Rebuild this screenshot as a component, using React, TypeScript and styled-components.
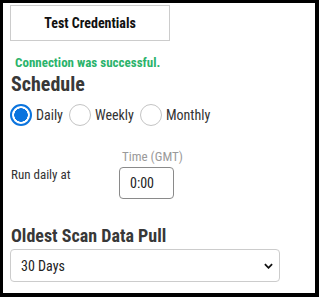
import { useState } from "react"
import styled, { createGlobalStyle } from "styled-components"

const GlobalStyle = createGlobalStyle`
  body {
    margin: 0;
    background: #fff;
    font-family: "Roboto Condensed", Roboto, sans-serif;
  }
`

const App = () => {
  const [schedule, setSchedule] = useState('daily')
  const [time, setTime] = useState('0:00')
  const [days, setDays] = useState('30')

  const options = [
    { value: 'daily', label: 'Daily' },
    { value: 'weekly', label: 'Weekly' },
    { value: 'monthly', label: 'Monthly' },
  ]

  return (
    <>
      <GlobalStyle />
      <Frame>
        <TestButton>Test Credentials</TestButton>
        <Success>Connection was successful.</Success>
        <Heading>Schedule</Heading>
        <RadioGroup>
          {options.map(o => (
            <RadioOption key={o.value}>
              <RadioInput
                type={'radio'}
                name={'schedule'}
                checked={schedule === o.value}
                onChange={() => setSchedule(o.value)}
              />
              {o.label}
            </RadioOption>
          ))}
        </RadioGroup>
        <TimeGrid>
          <span />
          <TimeLabel>Time (GMT)</TimeLabel>
          <RunLabel>Run daily at</RunLabel>
          <TimeInput value={time} onChange={e => setTime(e.target.value)} />
        </TimeGrid>
        <SubHeading>Oldest Scan Data Pull</SubHeading>
        <SelectWrap>
          <Select value={days} onChange={e => setDays(e.target.value)}>
            <option value={'30'}>30 Days</option>
            <option value={'60'}>60 Days</option>
            <option value={'90'}>90 Days</option>
          </Select>
          <Chevron viewBox="0 0 10 6">
            <path d="M1 1 L5 5 L9 1" fill="none" stroke="#111" strokeWidth="2" />
          </Chevron>
        </SelectWrap>
      </Frame>
    </>
  )
}

const Frame = styled.div`
  width: 319px;
  height: 297px;
  box-sizing: border-box;
  border: 3px solid #000;
  border-right-width: 4px;
  border-bottom-width: 4px;
  padding: 2px 0 0 7px;
  display: flex;
  flex-direction: column;
  align-items: flex-start;
`
const TestButton = styled.button`
  width: 160px;
  height: 36px;
  margin: 0;
  padding: 0;
  background: #fff;
  border: 1px solid #ccc;
  font-family: "Roboto Condensed", Roboto, sans-serif;
  font-weight: 700;
  font-size: 14px;
  color: #111;
`
const Success = styled.div`
  margin: 14px 0 0 5px;
  font-size: 13px;
  line-height: 15px;
  font-weight: 700;
  color: #2bb36b;
`
const Heading = styled.h2`
  margin: 2px 0 0 1px;
  font-size: 20px;
  line-height: 24px;
  font-weight: 700;
  color: #383838;
`
const RadioGroup = styled.div`
  display: flex;
  align-items: center;
  gap: 6px;
  margin-top: 8px;
  height: 22px;
`
const RadioOption = styled.label`
  display: flex;
  align-items: center;
  gap: 4px;
  font-size: 14px;
  color: #333;
`
const RadioInput = styled.input`
  appearance: none;
  margin: 0;
  width: 22px;
  height: 22px;
  box-sizing: border-box;
  border-radius: 50%;
  border: 1px solid #c4c4c4;
  background: #fff;
  &:checked {
    border: 2px solid #0b74de;
    background: radial-gradient(circle, #0b74de 0 6.5px, #fff 7px);
  }
`
const TimeGrid = styled.div`
  display: grid;
  grid-template-columns: 109px auto;
  margin-top: 23px;
  row-gap: 3px;
`
const TimeLabel = styled.div`
  padding-left: 3px;
  font-size: 13px;
  line-height: 15px;
  color: #9a9a9a;
`
const RunLabel = styled.div`
  margin-left: 1px;
  font-size: 13px;
  line-height: 15px;
  color: #333;
`
const TimeInput = styled.input`
  width: 55px;
  height: 32px;
  box-sizing: border-box;
  margin: 0;
  padding: 0 0 0 10px;
  border: 1px solid #8a8a8a;
  border-radius: 4px;
  font-family: "Roboto Condensed", Roboto, sans-serif;
  font-size: 14px;
  color: #222;
  outline: none;
`
const SubHeading = styled.h3`
  margin: 26px 0 0 1px;
  font-size: 18px;
  line-height: 22px;
  font-weight: 700;
  color: #383838;
`
const SelectWrap = styled.div`
  position: relative;
  margin-top: 2px;
`
const Select = styled.select`
  appearance: none;
  width: 270px;
  height: 33px;
  box-sizing: border-box;
  margin: 0;
  padding: 0 0 0 10px;
  border: 1px solid #ccc;
  border-radius: 4px;
  background: #fff;
  font-family: "Roboto Condensed", Roboto, sans-serif;
  font-size: 14px;
  color: #222;
  outline: none;
`
const Chevron = styled.svg`
  position: absolute;
  right: 7px;
  top: 14px;
  width: 9px;
  height: 6px;
  pointer-events: none;
`

export default App
